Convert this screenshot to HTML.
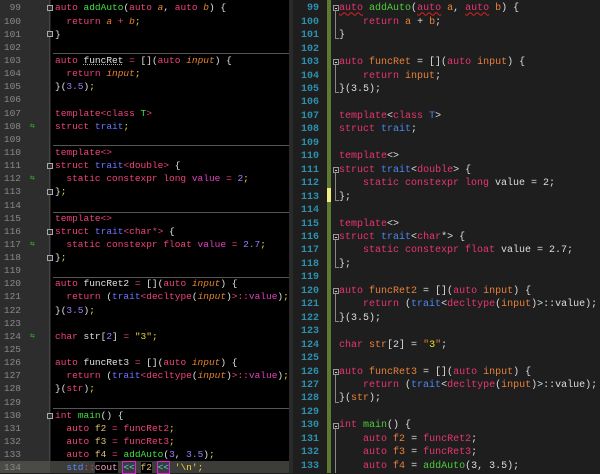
<!DOCTYPE html>
<html><head><meta charset="utf-8"><style>
*{margin:0;padding:0;box-sizing:border-box}
body{width:600px;height:473px;overflow:hidden;background:#1e1e1e;position:relative;font-family:"Liberation Mono","DejaVu Sans Mono",monospace}
#lg{position:absolute;left:0;top:0;width:50px;height:473px;background:#2d2d2d;border-right:1px solid #444}
#lc{position:absolute;left:51px;top:0;width:238px;height:473px;background:#000}
#sep{position:absolute;left:289px;top:0;width:4px;height:473px;background:#2a2a2a}
.ln{position:absolute;font-size:9.5px;line-height:13.14px;color:#8a8a8a;text-align:right;width:21px;left:0;top:1.4px;white-space:pre}
.lcode{position:absolute;left:55px;top:1.4px;font-size:9.5px;line-height:13.14px;color:#e0e0e0;white-space:pre}
.hr{position:absolute;left:53px;width:236px;height:1px;background:#555}
.k{color:#f0437a}.g{color:#42e042}.p{color:#e6832c;font-style:italic}.n{color:#a07dff}.b{color:#6a76ff}.y{color:#e8d838}.m{color:#e040c0}
#rn{position:absolute;left:290px;top:2.3px;width:29px;text-align:right;font-size:10px;line-height:13.45px;color:#2b91af;white-space:pre;font-weight:bold}
#bar{position:absolute;left:327px;top:0;width:4px;height:473px;background:#5c7a30}
.rcode{position:absolute;left:339px;top:2.3px;font-size:10px;line-height:13.45px;color:#dcdcdc;white-space:pre}
.K{color:#e8356e}.G{color:#4ecb3a}.P{color:#e8803a}.B{color:#4b86f0}.S{color:#e8e020}
.fb{position:absolute;left:333px;width:6px;height:6px;border:1px solid #999;font-size:0}
.fb:after{content:"";position:absolute;left:1px;top:1.5px;width:2px;height:1px;background:#ccc}
.vl{position:absolute;left:335px;width:4px;border-left:1px solid #888;border-bottom:1px solid #888}
.ic{position:absolute;left:30px;font-size:8px;color:#d04040;line-height:8px}
.fl{position:absolute;left:47px;width:6px;height:6px;border:1px solid #aaa;background:#2d2d2d}
</style></head><body>
<div id="lg"></div><div id="lc"></div><div id="sep"></div>
<div style="position:absolute;left:0;top:461px;width:289px;height:12px;background:#3c3c38"></div>
<div style="position:absolute;left:0;top:461px;width:50px;height:12px;background:#4a4a46"></div>
<div class="ln">99
100
101
102
103
104
105
106
107
108
109
110
111
112
113
114
115
116
117
118
119
120
121
122
123
124
125
126
127
128
129
130
131
132
133
134</div>
<div class="hr" style="top:53px"></div>
<div class="hr" style="top:145px"></div>
<div class="hr" style="top:212px"></div>
<div class="hr" style="top:277px"></div>
<div class="hr" style="top:408px"></div>
<div class="fl" style="top:5px"></div>
<div class="fl" style="top:31px"></div>
<div class="fl" style="top:163px"></div>
<div class="fl" style="top:189px"></div>
<div class="fl" style="top:229px"></div>
<div class="fl" style="top:255px"></div>
<div class="fl" style="top:413px"></div>
<div class="ic" style="top:123px"><span style="color:#3a3">⇆</span></div>
<div class="ic" style="top:175px"><span style="color:#3a3">⇆</span></div>
<div class="ic" style="top:241px"><span style="color:#3a3">⇆</span></div>
<div class="ic" style="top:333px"><span style="color:#3a3">⇆</span></div>
<div class="lcode"><span class="k">auto</span> <span class="g">addAuto</span>(<span class="k">auto</span> <span class="p">a</span>, <span class="k">auto</span> <span class="p">b</span>) {
  <span class="k">return</span> <span class="p">a</span> <span class="k">+</span> <span class="p">b</span><span class="y">;</span>
}

<span class="k">auto</span> <span style="text-decoration:underline dotted #aaa">funcRet</span> <span class="k">=</span> [](<span class="k">auto</span> <span class="p">input</span>) {
  <span class="k">return</span> <span class="p">input</span><span class="y">;</span>
}(<span class="n">3.5</span>)<span class="y">;</span>

<span class="k">template&lt;class</span> <span class="g">T</span><span class="k">&gt;</span>
<span class="k">struct</span> <span class="b">trait</span><span class="y">;</span>

<span class="k">template&lt;&gt;</span>
<span class="k">struct</span> <span class="b">trait</span><span class="k">&lt;double&gt;</span> {
  <span class="k">static constexpr long</span> <span class="m">value</span> <span class="k">=</span> <span class="n">2</span><span class="y">;</span>
}<span class="y">;</span>

<span class="k">template&lt;&gt;</span>
<span class="k">struct</span> <span class="b">trait</span><span class="k">&lt;char*&gt;</span> {
  <span class="k">static constexpr float</span> <span class="m">value</span> <span class="k">=</span> <span class="n">2.7</span><span class="y">;</span>
}<span class="y">;</span>

<span class="k">auto</span> funcRet2 <span class="k">=</span> [](<span class="k">auto</span> <span class="p">input</span>) {
  <span class="k">return</span> (<span class="b">trait</span><span class="k">&lt;decltype</span>(<span class="p">input</span>)<span class="k">&gt;::</span><span class="m">value</span>)<span class="y">;</span>
}(<span class="n">3.5</span>)<span class="y">;</span>

<span class="k">char</span> str[<span class="n">2</span>] <span class="k">=</span> <span class="y">"3";</span>

<span class="k">auto</span> funcRet3 <span class="k">=</span> [](<span class="k">auto</span> <span class="p">input</span>) {
  <span class="k">return</span> (<span class="b">trait</span><span class="k">&lt;decltype</span>(<span class="p">input</span>)<span class="k">&gt;::</span><span class="m">value</span>)<span class="y">;</span>
}(<span class="k">str</span>)<span class="y">;</span>

<span class="k">int</span> <span class="g">main</span>() {
  <span class="k">auto</span> <span style="color:#e0c070">f2</span> <span class="k">=</span> <span class="k">funcRet2</span><span class="y">;</span>
  <span class="k">auto</span> <span style="color:#e0c070">f3</span> <span class="k">=</span> <span class="k">funcRet3</span><span class="y">;</span>
  <span class="k">auto</span> <span style="color:#e0c070">f4</span> <span class="k">=</span> <span class="g">addAuto</span>(<span class="n">3</span>, <span class="n">3.5</span>)<span class="y">;</span>
  <span style="color:#5a8cff">std</span><span class="k">::</span><span style="color:#f0a0c0;background:#000">cout</span> <span style="outline:1px solid #e020e0;color:#40e0ff">&lt;&lt;</span> <span style="color:#e0c070;background:#000">f2</span> <span style="outline:1px solid #e020e0;color:#40e0ff">&lt;&lt;</span> <span class="y">'\n';</span></div>

<div id="rn">99
100
101
102
103
104
105
106
107
108
109
110
111
112
113
114
115
116
117
118
119
120
121
122
123
124
125
126
127
128
129
130
131
132
133</div>
<div id="bar"></div>
<div style="position:absolute;left:327px;top:188px;width:4px;height:14px;background:#f0f080"></div>
<div class="fb" style="top:5px"></div><div class="vl" style="top:11px;height:28px"></div>
<div class="fb" style="top:59px"></div><div class="vl" style="top:65px;height:28px"></div>
<div class="fb" style="top:167px"></div><div class="vl" style="top:173px;height:28px"></div>
<div class="fb" style="top:234px"></div><div class="vl" style="top:240px;height:28px"></div>
<div class="fb" style="top:288px"></div><div class="vl" style="top:294px;height:28px"></div>
<div class="fb" style="top:369px"></div><div class="vl" style="top:375px;height:28px"></div>
<div class="fb" style="top:423px"></div><div class="vl" style="top:429px;height:44px;border-bottom:none"></div>
<div class="rcode"><span class="K" style="text-decoration:underline wavy #e02020 1px">auto</span> <span class="G">addAuto</span>(<span class="K" style="text-decoration:underline wavy #e02020 1px">auto</span> <span class="P">a</span>, <span class="K" style="text-decoration:underline wavy #e02020 1px">auto</span> <span class="P">b</span>) {
    <span class="K">return</span> <span class="P">a</span> + <span class="P">b</span>;
}

<span class="K">auto</span> <span class="P">funcRet</span> = [](<span class="K">auto</span> <span class="P">input</span>) {
    <span class="K">return</span> <span class="P">input</span>;
}(3.5);

<span class="K">template</span>&lt;<span class="K">class</span> <span class="B">T</span>&gt;
<span class="K">struct</span> <span class="B">trait</span>;

<span class="K">template</span>&lt;&gt;
<span class="K">struct</span> <span class="B">trait</span>&lt;<span class="K">double</span>&gt; {
    <span class="K">static constexpr long</span> value = 2;
};

<span class="K">template</span>&lt;&gt;
<span class="K">struct</span> <span class="B">trait</span>&lt;<span class="K">char</span>*&gt; {
    <span class="K">static constexpr float</span> value = 2.7;
};

<span class="K">auto</span> <span class="P">funcRet2</span> = [](<span class="K">auto</span> <span class="P">input</span>) {
    <span class="K">return</span> (<span class="B">trait</span>&lt;<span class="K">decltype</span>(<span class="P">input</span>)&gt;::value);
}(3.5);

<span class="K">char</span> <span class="P">str</span>[2] = <span class="P">"</span><span class="S">3</span><span class="P">"</span>;

<span class="K">auto</span> <span class="P">funcRet3</span> = [](<span class="K">auto</span> <span class="P">input</span>) {
    <span class="K">return</span> (<span class="B">trait</span>&lt;<span class="K">decltype</span>(<span class="P">input</span>)&gt;::value);
}(<span class="P">str</span>);

<span class="K">int</span> <span class="G">main</span>() {
    <span class="K">auto</span> <span class="P">f2</span> = <span class="K">funcRet2</span>;
    <span class="K">auto</span> <span class="P">f3</span> = <span class="K">funcRet3</span>;
    <span class="K">auto</span> <span class="P">f4</span> = <span class="G">addAuto</span>(3, 3.5);</div>
</body></html>
